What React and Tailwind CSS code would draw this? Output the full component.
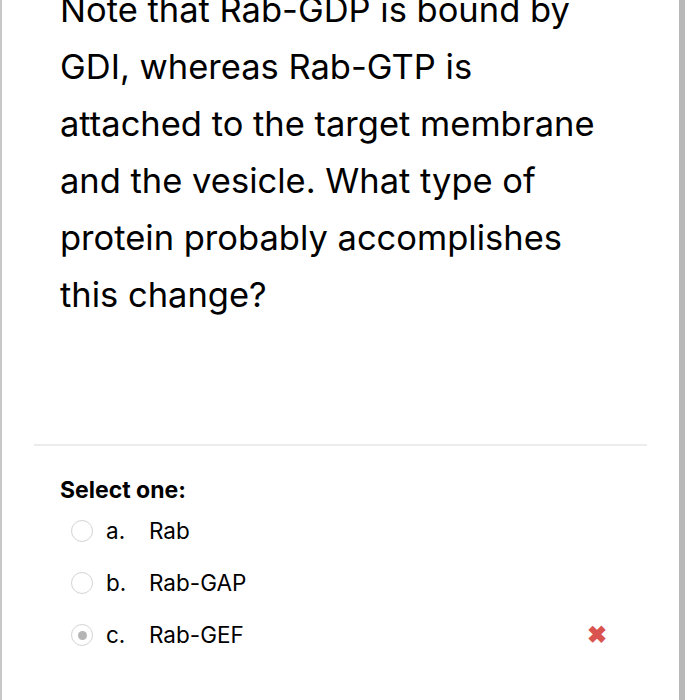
import React from 'react';

const options = [
  { key: 'a.', label: 'Rab', checked: false },
  { key: 'b.', label: 'Rab-GAP', checked: false },
  { key: 'c.', label: 'Rab-GEF', checked: true, wrong: true },
];

const lines = [
  'Note that Rab-GDP is bound by',
  'GDI, whereas Rab-GTP is',
  'attached to the target membrane',
  'and the vesicle. What type of',
  'protein probably accomplishes',
  'this change?',
];

const Radio = ({ checked }) => (
  <span className="flex h-[22px] w-[22px] items-center justify-center rounded-full border-[1.5px] border-[#d4d4d4] bg-white">
    {checked && <span className="h-[9px] w-[9px] rounded-full bg-[#b5b5b5]" />}
  </span>
);

const App = () => {
  return (
    <div className="h-[700px] w-[687px] overflow-hidden bg-white font-['Inter','Liberation_Sans',Arial,sans-serif] text-black">
      <div className="flex h-full">
        <div className="w-[2px] bg-[#c8c8c8]" />
        <div className="flex-1">
          <p className="-mt-[19px] whitespace-nowrap pl-[58px] text-[34.5px] leading-[57px]">
            {lines.map((l) => (
              <span key={l} className="block">{l}</span>
            ))}
          </p>
          <div className="mx-[32px] mt-[121px] h-[2px] bg-[#ececec]" />
          <div className="pl-[58px] pt-[31px]">
            <div className="text-[23px] font-bold leading-[26px]">Select one:</div>
            <div className="mt-[2px] flex flex-col">
              {options.map((o) => (
                <div key={o.key} className="flex h-[52px] items-center">
                  <span className="ml-[11px]">
                    <Radio checked={o.checked} />
                  </span>
                  <span className="ml-[13px] w-[43px] text-[22.5px]">{o.key}</span>
                  <span className="text-[22.5px]">{o.label}</span>
                  {o.wrong && (
                    <span className="ml-auto mr-[72px] text-[24px] font-bold leading-none text-[#d9534f]">✖</span>
                  )}
                </div>
              ))}
            </div>
          </div>
        </div>
        <div className="mr-[2px] w-[6px] bg-[#b8b8b8]" />
      </div>
    </div>
  );
};

export default App;
